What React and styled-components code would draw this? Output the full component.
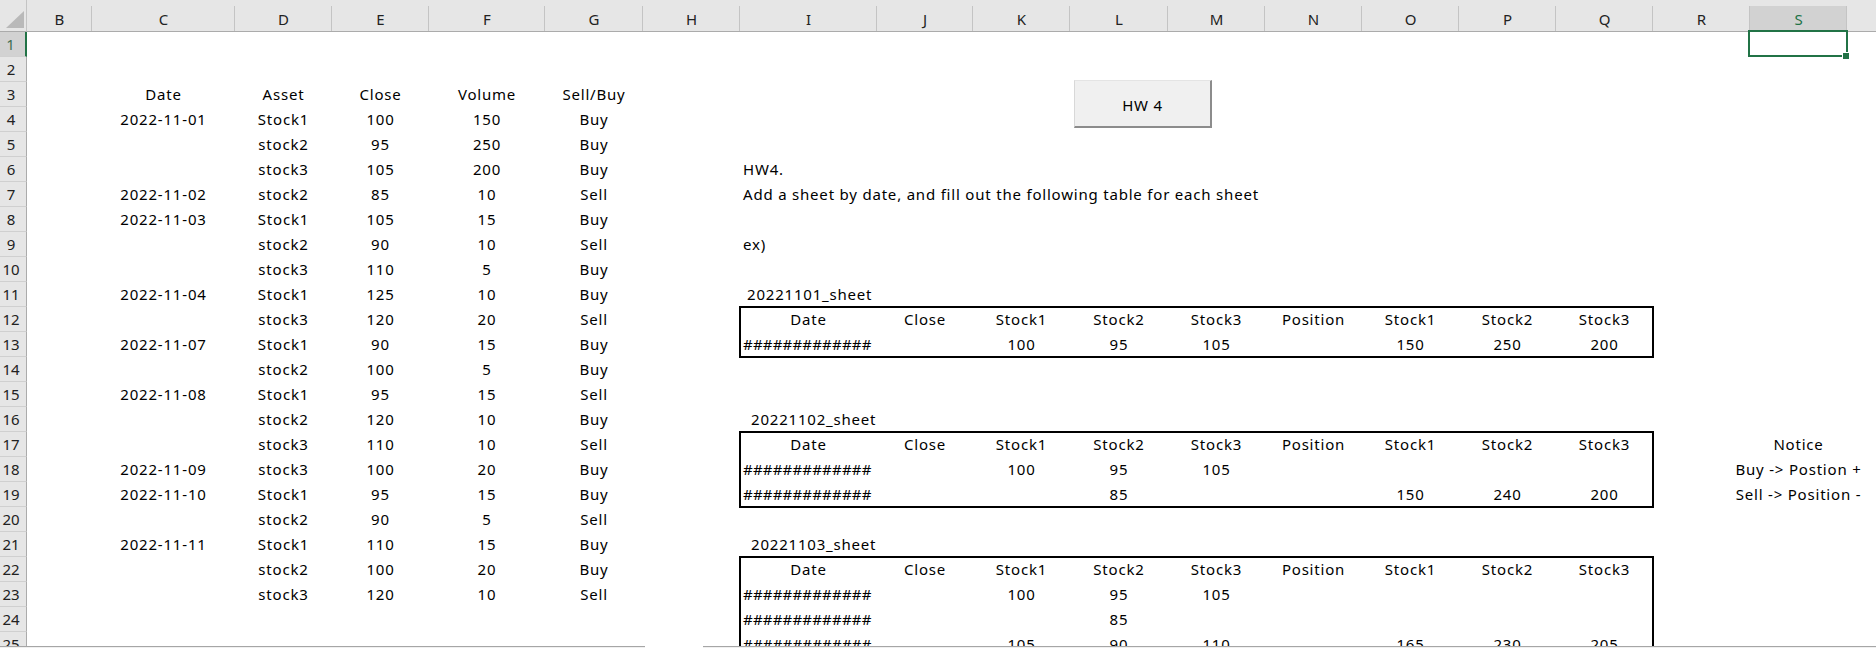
import React from "react";
import styled, { createGlobalStyle } from "styled-components";

const GlobalStyle = createGlobalStyle`
  html, body {
    margin: 0;
    padding: 0;
    background: #fff;
    overflow: hidden;
  }
  body {
    font-family: "Noto Sans", "Noto Sans CJK KR", sans-serif;
  }
`;

const COLS = [
  { id: "B", w: 65 },
  { id: "C", w: 143 },
  { id: "D", w: 97 },
  { id: "E", w: 97 },
  { id: "F", w: 116 },
  { id: "G", w: 98 },
  { id: "H", w: 97 },
  { id: "I", w: 137 },
  { id: "J", w: 96 },
  { id: "K", w: 97 },
  { id: "L", w: 98 },
  { id: "M", w: 97 },
  { id: "N", w: 97 },
  { id: "O", w: 97 },
  { id: "P", w: 97 },
  { id: "Q", w: 97 },
  { id: "R", w: 97 },
  { id: "S", w: 97 },
];
const ROWS = 25;
// grid column of a sheet letter (column 1 holds the row numbers)
const col = (id) => COLS.findIndex((c) => c.id === id) + 2;

const Page = styled.div`
  width: 1876px;
  height: 648px;
  display: flex;
  flex-direction: column;
  overflow: hidden;
`;

const Sheet = styled.div`
  display: grid;
  grid-template-columns: 27px ${COLS.map((c) => c.w + "px").join(" ")} 1fr;
  grid-template-rows: 32px repeat(${ROWS}, 25px);
  height: 646px;
  overflow: hidden;
  font-size: 15px;
  letter-spacing: 0.8px;
  color: #000;
`;

const Corner = styled.div`
  grid-row: 1;
  grid-column: 1;
  background: #e6e6e6;
  border-bottom: 1px solid #ababab;
  border-right: 1px solid #c4c4c4;
  display: flex;
  align-items: flex-end;
  justify-content: flex-end;
  padding: 0 2px 3px 0;
`;

const ColHead = styled.div`
  grid-row: 1;
  grid-column: ${(p) => p.$c};
  position: relative;
  display: flex;
  align-items: center;
  justify-content: center;
  padding-top: 6px;
  background: linear-gradient(
    to bottom,
    #e6e6e6 6px,
    ${(p) => (p.$active ? "#d2d2d2" : "#e6e6e6")} 6px
  );
  border-bottom: 1px solid #ababab;
  color: ${(p) => (p.$active ? "#217346" : "#222")};
  letter-spacing: 0;
  &::after {
    content: "";
    position: absolute;
    right: 0;
    top: 6px;
    bottom: 0;
    width: 1px;
    background: ${(p) => (p.$last ? "transparent" : "#c4c4c4")};
  }
`;

const RowHead = styled.div`
  grid-row: ${(p) => p.$r + 1};
  grid-column: 1;
  display: flex;
  align-items: center;
  justify-content: center;
  padding-right: 4px;
  background: ${(p) => (p.$active ? "#d2d2d2" : "#e6e6e6")};
  border-bottom: 1px solid #d0d0d0;
  border-right: ${(p) => (p.$active ? "2px solid #217346" : "1px solid #ababab")};
  color: ${(p) => (p.$active ? "#3f6e52" : "#222")};
  letter-spacing: 0;
`;

const Cell = styled.div`
  grid-row: ${(p) => p.$r + 1};
  grid-column: ${(p) => p.$c};
  display: flex;
  align-items: flex-end;
  justify-content: ${(p) =>
    p.$align === "left" ? "flex-start" : p.$align === "right" ? "flex-end" : "center"};
  padding: 0 3px 3px ${(p) => p.$indent || 3}px;
  line-height: 20px;
  white-space: nowrap;
  min-width: 0;
  overflow: visible;
  z-index: 1;
`;

const HashCell = styled(Cell)`
  justify-content: flex-start;
  overflow: hidden;
  letter-spacing: 0.2px;
`;

const TableBox = styled.div`
  grid-row: ${(p) => p.$r + 1} / span ${(p) => p.$n};
  grid-column: ${col("I")} / ${col("Q") + 1};
  margin: -1px;
  border: 2px solid #000;
  pointer-events: none;
  z-index: 2;
`;

const Selection = styled.div`
  grid-row: 2;
  grid-column: ${col("S")};
  margin: -2px -1px 0 -2px;
  border: 2px solid #217346;
  position: relative;
  z-index: 3;
  &::after {
    content: "";
    position: absolute;
    right: -3px;
    bottom: -4px;
    width: 7px;
    height: 7px;
    box-sizing: border-box;
    background: #217346;
    border-left: 1px solid #fff;
    border-top: 1px solid #fff;
  }
`;

const MacroButton = styled.button`
  grid-row: 4 / span 2;
  grid-column: ${col("L")} / span 2;
  align-self: start;
  justify-self: start;
  margin: -2px 0 0 4px;
  width: 138px;
  height: 48px;
  padding: 3px 0 0;
  background: #f0f0f0;
  border: none;
  border-top: 1px solid #e4e4e4;
  border-left: 1px solid #d8d8d8;
  border-right: 2px solid #8c8c8c;
  border-bottom: 2px solid #8c8c8c;
  font-family: inherit;
  font-size: 15px;
  letter-spacing: 0.8px;
  color: #000;
  z-index: 2;
`;

const Footer = styled.div`
  display: flex;
  height: 2px;
`;

const FooterBar = styled.div`
  flex: ${(p) => (p.$w ? `0 0 ${p.$w}px` : "1")};
  border-top: 1px solid #a6a6a6;
  background: #f0f0f0;
`;

const FooterGap = styled.div`
  flex: 0 0 58px;
`;

const LEFT = [
  [3, "Date", "Asset", "Close", "Volume", "Sell/Buy"],
  [4, "2022-11-01", "Stock1", "100", "150", "Buy"],
  [5, "", "stock2", "95", "250", "Buy"],
  [6, "", "stock3", "105", "200", "Buy"],
  [7, "2022-11-02", "stock2", "85", "10", "Sell"],
  [8, "2022-11-03", "Stock1", "105", "15", "Buy"],
  [9, "", "stock2", "90", "10", "Sell"],
  [10, "", "stock3", "110", "5", "Buy"],
  [11, "2022-11-04", "Stock1", "125", "10", "Buy"],
  [12, "", "stock3", "120", "20", "Sell"],
  [13, "2022-11-07", "Stock1", "90", "15", "Buy"],
  [14, "", "stock2", "100", "5", "Buy"],
  [15, "2022-11-08", "Stock1", "95", "15", "Sell"],
  [16, "", "stock2", "120", "10", "Buy"],
  [17, "", "stock3", "110", "10", "Sell"],
  [18, "2022-11-09", "stock3", "100", "20", "Buy"],
  [19, "2022-11-10", "Stock1", "95", "15", "Buy"],
  [20, "", "stock2", "90", "5", "Sell"],
  [21, "2022-11-11", "Stock1", "110", "15", "Buy"],
  [22, "", "stock2", "100", "20", "Buy"],
  [23, "", "stock3", "120", "10", "Sell"],
];

const TABLE_HEAD = ["Date", "Close", "Stock1", "Stock2", "Stock3", "Position", "Stock1", "Stock2", "Stock3"];
const TABLE_COLS = ["I", "J", "K", "L", "M", "N", "O", "P", "Q"];

const TABLES = [
  {
    label: "20221101_sheet",
    indent: 7,
    row: 11,
    rows: [{ K: 100, L: 95, M: 105, O: 150, P: 250, Q: 200 }],
  },
  {
    label: "20221102_sheet",
    indent: 11,
    row: 16,
    rows: [
      { K: 100, L: 95, M: 105 },
      { L: 85, O: 150, P: 240, Q: 200 },
    ],
  },
  {
    label: "20221103_sheet",
    indent: 11,
    row: 21,
    rows: [
      { K: 100, L: 95, M: 105 },
      { L: 85 },
      { K: 105, L: 90, M: 110, O: 165, P: 230, Q: 205 },
    ],
  },
];

function CornerMark() {
  return (
    <svg width="18" height="17" viewBox="0 0 18 17">
      <polygon points="18,0 18,17 0,17" fill="#b9b9b9" />
    </svg>
  );
}

function SheetTable({ table }) {
  const { label, indent, row, rows } = table;
  return (
    <>
      <Cell $r={row} $c={col("I")} $align="left" $indent={indent}>
        {label}
      </Cell>
      <TableBox $r={row + 1} $n={rows.length + 1} />
      {TABLE_HEAD.map((h, i) => (
        <Cell key={"h" + i} $r={row + 1} $c={col(TABLE_COLS[i])}>
          {h}
        </Cell>
      ))}
      {rows.map((values, k) => (
        <React.Fragment key={k}>
          <HashCell $r={row + 2 + k} $c={col("I")}>
            #############
          </HashCell>
          {Object.entries(values).map(([c, v]) => (
            <Cell key={c} $r={row + 2 + k} $c={col(c)}>
              {v}
            </Cell>
          ))}
        </React.Fragment>
      ))}
    </>
  );
}

export default function App() {
  return (
    <Page>
      <GlobalStyle />
      <Sheet>
        <Corner>
          <CornerMark />
        </Corner>
        {COLS.map((c) => (
          <ColHead key={c.id} $c={col(c.id)} $active={c.id === "S"}>
            {c.id}
          </ColHead>
        ))}
        <ColHead $c={COLS.length + 2} $last />
        {Array.from({ length: ROWS }, (_, i) => (
          <RowHead key={i} $r={i + 1} $active={i === 0}>
            {i + 1}
          </RowHead>
        ))}

        {LEFT.map(([r, ...vals]) =>
          vals.map((v, i) =>
            v ? (
              <Cell key={r + "-" + i} $r={r} $c={col("C") + i}>
                {v}
              </Cell>
            ) : null
          )
        )}

        <MacroButton>HW 4</MacroButton>

        <Cell $r={6} $c={col("I")} $align="left">
          HW4.
        </Cell>
        <Cell $r={7} $c={col("I")} $align="left">
          Add a sheet by date, and fill out the following table for each sheet
        </Cell>
        <Cell $r={9} $c={col("I")} $align="left">
          ex)
        </Cell>

        {TABLES.map((t) => (
          <SheetTable key={t.label} table={t} />
        ))}

        <Cell $r={17} $c={col("S")}>Notice</Cell>
        <Cell $r={18} $c={col("S")}>Buy -&gt; Postion +</Cell>
        <Cell $r={19} $c={col("S")}>Sell -&gt; Position -</Cell>

        <Selection />
      </Sheet>
      <Footer>
        <FooterBar $w={645} />
        <FooterGap />
        <FooterBar />
      </Footer>
    </Page>
  );
}
